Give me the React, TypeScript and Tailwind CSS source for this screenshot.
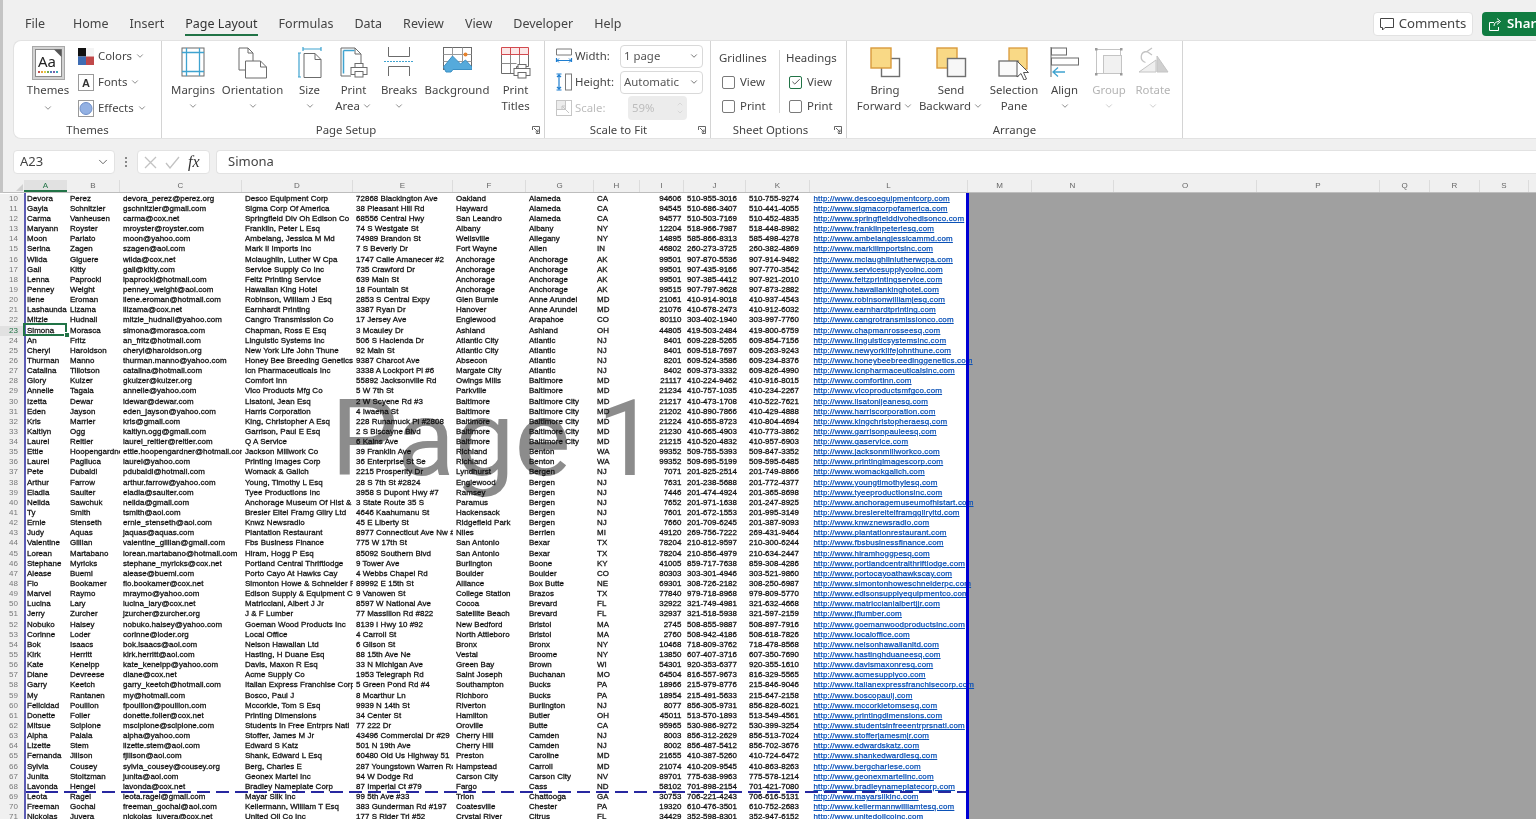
import React from 'react';
import { ChevronDown, Check } from 'lucide-react';

const ui = "font-['Noto_Sans','Open_Sans',sans-serif]";

const rawRows = `Devora|Perez|devora_perez@perez.org|Desco Equipment Corp|72868 Blackington Ave|Oakland|Alameda|CA|94606|510-955-3016|510-755-9274|http://www.descoequipmentcorp.com
Gayla|Schnitzler|gschnitzler@gmail.com|Sigma Corp Of America|38 Pleasant Hill Rd|Hayward|Alameda|CA|94545|510-686-3407|510-441-4055|http://www.sigmacorpofamerica.com
Carma|Vanheusen|carma@cox.net|Springfield Div Oh Edison Co|68556 Central Hwy|San Leandro|Alameda|CA|94577|510-503-7169|510-452-4835|http://www.springfielddivohedisonco.com
Maryann|Royster|mroyster@royster.com|Franklin, Peter L Esq|74 S Westgate St|Albany|Albany|NY|12204|518-966-7987|518-448-8982|http://www.franklinpeterlesq.com
Moon|Parlato|moon@yahoo.com|Ambelang, Jessica M Md|74989 Brandon St|Wellsville|Allegany|NY|14895|585-866-8313|585-498-4278|http://www.ambelangjessicammd.com
Serina|Zagen|szagen@aol.com|Mark Ii Imports Inc|7 S Beverly Dr|Fort Wayne|Allen|IN|46802|260-273-3725|260-382-4869|http://www.markiiimportsinc.com
Wilda|Giguere|wilda@cox.net|Mclaughlin, Luther W Cpa|1747 Calle Amanecer #2|Anchorage|Anchorage|AK|99501|907-870-5536|907-914-9482|http://www.mclaughlinlutherwcpa.com
Gail|Kitty|gail@kitty.com|Service Supply Co Inc|735 Crawford Dr|Anchorage|Anchorage|AK|99501|907-435-9166|907-770-3542|http://www.servicesupplycoinc.com
Lenna|Paprocki|lpaprocki@hotmail.com|Feltz Printing Service|639 Main St|Anchorage|Anchorage|AK|99501|907-385-4412|907-921-2010|http://www.feltzprintingservice.com
Penney|Weight|penney_weight@aol.com|Hawaiian King Hotel|18 Fountain St|Anchorage|Anchorage|AK|99515|907-797-9628|907-873-2882|http://www.hawaiiankinghotel.com
Ilene|Eroman|ilene.eroman@hotmail.com|Robinson, William J Esq|2853 S Central Expy|Glen Burnie|Anne Arundel|MD|21061|410-914-9018|410-937-4543|http://www.robinsonwilliamjesq.com
Lashaunda|Lizama|llizama@cox.net|Earnhardt Printing|3387 Ryan Dr|Hanover|Anne Arundel|MD|21076|410-678-2473|410-912-6032|http://www.earnhardtprinting.com
Mitzie|Hudnall|mitzie_hudnall@yahoo.com|Cangro Transmission Co|17 Jersey Ave|Englewood|Arapahoe|CO|80110|303-402-1940|303-997-7760|http://www.cangrotransmissionco.com
Simona|Morasca|simona@morasca.com|Chapman, Ross E Esq|3 Mcauley Dr|Ashland|Ashland|OH|44805|419-503-2484|419-800-6759|http://www.chapmanrosseesq.com
An|Fritz|an_fritz@hotmail.com|Linguistic Systems Inc|506 S Hacienda Dr|Atlantic City|Atlantic|NJ|8401|609-228-5265|609-854-7156|http://www.linguisticsystemsinc.com
Cheryl|Haroldson|cheryl@haroldson.org|New York Life John Thune|92 Main St|Atlantic City|Atlantic|NJ|8401|609-518-7697|609-263-9243|http://www.newyorklifejohnthune.com
Thurman|Manno|thurman.manno@yahoo.com|Honey Bee Breeding Genetics|9387 Charcot Ave|Absecon|Atlantic|NJ|8201|609-524-3586|609-234-8376|http://www.honeybeebreedinggenetics.com
Catalina|Tillotson|catalina@hotmail.com|Icn Pharmaceuticals Inc|3338 A Lockport Pl #6|Margate City|Atlantic|NJ|8402|609-373-3332|609-826-4990|http://www.icnpharmaceuticalsinc.com
Glory|Kulzer|gkulzer@kulzer.org|Comfort Inn|55892 Jacksonville Rd|Owings Mills|Baltimore|MD|21117|410-224-9462|410-916-8015|http://www.comfortinn.com
Annelle|Tagala|annelle@yahoo.com|Vico Products Mfg Co|5 W 7th St|Parkville|Baltimore|MD|21234|410-757-1035|410-234-2267|http://www.vicoproductsmfgco.com
Izetta|Dewar|idewar@dewar.com|Lisatoni, Jean Esq|2 W Scyene Rd #3|Baltimore|Baltimore City|MD|21217|410-473-1708|410-522-7621|http://www.lisatonijeanesq.com
Eden|Jayson|eden_jayson@yahoo.com|Harris Corporation|4 Iwaena St|Baltimore|Baltimore City|MD|21202|410-890-7866|410-429-4888|http://www.harriscorporation.com
Kris|Marrier|kris@gmail.com|King, Christopher A Esq|228 Runamuck Pl #2808|Baltimore|Baltimore City|MD|21224|410-655-8723|410-804-4694|http://www.kingchristopheraesq.com
Kaitlyn|Ogg|kaitlyn.ogg@gmail.com|Garrison, Paul E Esq|2 S Biscayne Blvd|Baltimore|Baltimore City|MD|21230|410-665-4903|410-773-3862|http://www.garrisonpauleesq.com
Laurel|Reitler|laurel_reitler@reitler.com|Q A Service|6 Kains Ave|Baltimore|Baltimore City|MD|21215|410-520-4832|410-957-6903|http://www.qaservice.com
Ettie|Hoopengardner|ettie.hoopengardner@hotmail.com|Jackson Millwork Co|39 Franklin Ave|Richland|Benton|WA|99352|509-755-5393|509-847-3352|http://www.jacksonmillworkco.com
Laurel|Pagliuca|laurel@yahoo.com|Printing Images Corp|36 Enterprise St Se|Richland|Benton|WA|99352|509-695-5199|509-595-6485|http://www.printingimagescorp.com
Pete|Dubaldi|pdubaldi@hotmail.com|Womack & Galich|2215 Prosperity Dr|Lyndhurst|Bergen|NJ|7071|201-825-2514|201-749-8866|http://www.womackgalich.com
Arthur|Farrow|arthur.farrow@yahoo.com|Young, Timothy L Esq|28 S 7th St #2824|Englewood|Bergen|NJ|7631|201-238-5688|201-772-4377|http://www.youngtimothylesq.com
Eladia|Saulter|eladia@saulter.com|Tyee Productions Inc|3958 S Dupont Hwy #7|Ramsey|Bergen|NJ|7446|201-474-4924|201-365-8698|http://www.tyeeproductionsinc.com
Nelida|Sawchuk|nelida@gmail.com|Anchorage Museum Of Hist & Art|3 State Route 35 S|Paramus|Bergen|NJ|7652|201-971-1638|201-247-8925|http://www.anchoragemuseumofhistart.com
Ty|Smith|tsmith@aol.com|Bresler Eitel Framg Gllry Ltd|4646 Kaahumanu St|Hackensack|Bergen|NJ|7601|201-672-1553|201-995-3149|http://www.breslereitelframggllryltd.com
Ernie|Stenseth|ernie_stenseth@aol.com|Knwz Newsradio|45 E Liberty St|Ridgefield Park|Bergen|NJ|7660|201-709-6245|201-387-9093|http://www.knwznewsradio.com
Judy|Aquas|jaquas@aquas.com|Plantation Restaurant|8977 Connecticut Ave Nw #3|Niles|Berrien|MI|49120|269-756-7222|269-431-9464|http://www.plantationrestaurant.com
Valentine|Gillian|valentine_gillian@gmail.com|Fbs Business Finance|775 W 17th St|San Antonio|Bexar|TX|78204|210-812-9597|210-300-6244|http://www.fbsbusinessfinance.com
Lorean|Martabano|lorean.martabano@hotmail.com|Hiram, Hogg P Esq|85092 Southern Blvd|San Antonio|Bexar|TX|78204|210-856-4979|210-634-2447|http://www.hiramhoggpesq.com
Stephane|Myricks|stephane_myricks@cox.net|Portland Central Thriftlodge|9 Tower Ave|Burlington|Boone|KY|41005|859-717-7638|859-308-4286|http://www.portlandcentralthriftlodge.com
Alease|Buemi|alease@buemi.com|Porto Cayo At Hawks Cay|4 Webbs Chapel Rd|Boulder|Boulder|CO|80303|303-301-4946|303-521-9860|http://www.portocayoathawkscay.com
Flo|Bookamer|flo.bookamer@cox.net|Simonton Howe & Schneider Pc|89992 E 15th St|Alliance|Box Butte|NE|69301|308-726-2182|308-250-6987|http://www.simontonhoweschneiderpc.com
Marvel|Raymo|mraymo@yahoo.com|Edison Supply & Equipment Co|9 Vanowen St|College Station|Brazos|TX|77840|979-718-8968|979-809-5770|http://www.edisonsupplyequipmentco.com
Lucina|Lary|lucina_lary@cox.net|Matricciani, Albert J Jr|8597 W National Ave|Cocoa|Brevard|FL|32922|321-749-4981|321-632-4668|http://www.matriccianialbertjjr.com
Jerry|Zurcher|jzurcher@zurcher.org|J & F Lumber|77 Massillon Rd #822|Satellite Beach|Brevard|FL|32937|321-518-5938|321-597-2159|http://www.jflumber.com
Nobuko|Halsey|nobuko.halsey@yahoo.com|Goeman Wood Products Inc|8139 I Hwy 10 #92|New Bedford|Bristol|MA|2745|508-855-9887|508-897-7916|http://www.goemanwoodproductsinc.com
Corinne|Loder|corinne@loder.org|Local Office|4 Carroll St|North Attleboro|Bristol|MA|2760|508-942-4186|508-618-7826|http://www.localoffice.com
Bok|Isaacs|bok.isaacs@aol.com|Nelson Hawaiian Ltd|6 Gilson St|Bronx|Bronx|NY|10468|718-809-3762|718-478-8568|http://www.nelsonhawaiianltd.com
Kirk|Herritt|kirk.herritt@aol.com|Hasting, H Duane Esq|88 15th Ave Ne|Vestal|Broome|NY|13850|607-407-3716|607-350-7690|http://www.hastinghduaneesq.com
Kate|Keneipp|kate_keneipp@yahoo.com|Davis, Maxon R Esq|33 N Michigan Ave|Green Bay|Brown|WI|54301|920-353-6377|920-355-1610|http://www.davismaxonresq.com
Diane|Devreese|diane@cox.net|Acme Supply Co|1953 Telegraph Rd|Saint Joseph|Buchanan|MO|64504|816-557-9673|816-329-5565|http://www.acmesupplyco.com
Garry|Keetch|garry_keetch@hotmail.com|Italian Express Franchise Corp|5 Green Pond Rd #4|Southampton|Bucks|PA|18966|215-979-8776|215-846-9046|http://www.italianexpressfranchisecorp.com
My|Rantanen|my@hotmail.com|Bosco, Paul J|8 Mcarthur Ln|Richboro|Bucks|PA|18954|215-491-5633|215-647-2158|http://www.boscopaulj.com
Felicidad|Poullion|fpoullion@poullion.com|Mccorkle, Tom S Esq|9939 N 14th St|Riverton|Burlington|NJ|8077|856-305-9731|856-828-6021|http://www.mccorkletomsesq.com
Donette|Foller|donette.foller@cox.net|Printing Dimensions|34 Center St|Hamilton|Butler|OH|45011|513-570-1893|513-549-4561|http://www.printingdimensions.com
Mitsue|Scipione|mscipione@scipione.com|Students In Free Entrprs Natl|77 222 Dr|Oroville|Butte|CA|95965|530-986-9272|530-399-3254|http://www.studentsinfreeentrprsnatl.com
Alpha|Palaia|alpha@yahoo.com|Stoffer, James M Jr|43496 Commercial Dr #29|Cherry Hill|Camden|NJ|8003|856-312-2629|856-513-7024|http://www.stofferjamesmjr.com
Lizette|Stem|lizette.stem@aol.com|Edward S Katz|501 N 19th Ave|Cherry Hill|Camden|NJ|8002|856-487-5412|856-702-3676|http://www.edwardskatz.com
Fernanda|Jillson|fjillson@aol.com|Shank, Edward L Esq|60480 Old Us Highway 51|Preston|Caroline|MD|21655|410-387-5260|410-724-6472|http://www.shankedwardlesq.com
Sylvia|Cousey|sylvia_cousey@cousey.org|Berg, Charles E|287 Youngstown Warren Rd|Hampstead|Carroll|MD|21074|410-209-9545|410-863-8263|http://www.bergcharlese.com
Junita|Stoltzman|junita@aol.com|Geonex Martel Inc|94 W Dodge Rd|Carson City|Carson City|NV|89701|775-638-9963|775-578-1214|http://www.geonexmartelinc.com
Lavonda|Hengel|lavonda@cox.net|Bradley Nameplate Corp|87 Imperial Ct #79|Fargo|Cass|ND|58102|701-898-2154|701-421-7080|http://www.bradleynameplatecorp.com
Leota|Ragel|leota.ragel@gmail.com|Mayar Silk Inc|99 5th Ave #33|Trion|Chattooga|GA|30753|706-221-4243|706-616-5131|http://www.mayarsilkinc.com
Freeman|Gochal|freeman_gochal@aol.com|Kellermann, William T Esq|383 Gunderman Rd #197|Coatesville|Chester|PA|19320|610-476-3501|610-752-2683|http://www.kellermannwilliamtesq.com
Nickolas|Juvera|nickolas_juvera@cox.net|United Oil Co Inc|177 S Rider Trl #52|Crystal River|Citrus|FL|34429|352-598-8301|352-947-6152|http://www.unitedoilcoinc.com`;

const rows = rawRows.split('\n').map(line => line.split('|'));

const rowGrid =
  'grid grid-cols-[24px_43px_53px_122px_111px_100px_73px_68px_46px_44px_62px_64px_158px]';

const headerCols: [string, string][] = [
  ['A', 'w-[43px]'],
  ['B', 'w-[53px]'],
  ['C', 'w-[122px]'],
  ['D', 'w-[111px]'],
  ['E', 'w-[100px]'],
  ['F', 'w-[73px]'],
  ['G', 'w-[68px]'],
  ['H', 'w-[46px]'],
  ['I', 'w-[44px]'],
  ['J', 'w-[62px]'],
  ['K', 'w-[64px]'],
  ['L', 'w-[158px]'],
  ['M', 'w-[64px]'],
  ['N', 'w-[82px]'],
  ['O', 'w-[143px]'],
  ['P', 'w-[123px]'],
  ['Q', 'w-[50px]'],
  ['R', 'w-[50px]'],
  ['S', 'w-[49px]'],
];

const Chev = ({ className = 'text-[#555]' }: { className?: string }) => (
  <ChevronDown size={10} strokeWidth={1.6} className={`inline-block ${className}`} />
);

/* ribbon icons */
const ThemesIcon = () => (
  <svg width="33" height="34" viewBox="0 0 33 34">
    <rect x="0.500" y="0.500" width="32" height="33" fill="#d2d2d2" stroke="#a8a8a8" />
    <rect x="3.500" y="3.500" width="26" height="27" fill="#fff" stroke="#8a8a8a" />
    <path d="M22 3.500h7.500v7.500z" fill="#555" />
    <text x="6" y="21" fontSize="15" fontFamily="Noto Sans" fill="#222">Aa</text>
    {['#c0504d', '#e8a33d', '#e3cf45', '#6fa84f', '#4f81bd', '#7d5fa8', '#3aa6b9'].map((c, i) => (
      <rect key={c} x={6 + i * 3} y="25" width="2" height="2" fill={c} />
    ))}
  </svg>
);

const ColorsIcon = () => (
  <svg width="16" height="17" viewBox="0 0 16 17">
    <rect x="0" y="0" width="8" height="8.500" fill="#111" />
    <rect x="8" y="0" width="8" height="8.500" fill="#f4f4f4" />
    <rect x="0" y="8.500" width="8" height="8.500" fill="#3f6db3" />
    <rect x="8" y="8.500" width="8" height="8.500" fill="#c0484a" />
  </svg>
);

const FontsIcon = () => (
  <svg width="16" height="17" viewBox="0 0 16 17">
    <rect x="0.500" y="0.500" width="15" height="16" fill="#fff" stroke="#9a9a9a" />
    <text x="4" y="13" fontSize="11" fontWeight="700" fontFamily="Liberation Sans" fill="#333">A</text>
  </svg>
);

const EffectsIcon = () => (
  <svg width="16" height="17" viewBox="0 0 16 17">
    <rect x="0.500" y="0.500" width="15" height="16" fill="#fff" stroke="#9a9a9a" />
    <circle cx="8" cy="8.500" r="6" fill="#93b1e3" stroke="#6f8fc9" />
  </svg>
);

const MarginsIcon = () => (
  <svg width="24" height="30" viewBox="0 0 24 30" fill="none">
    <rect x="1" y="1" width="22" height="28" stroke="#6b6b6b" />
    <path d="M1 5.500h22M1 24.500h22M5.500 1v28M18.500 1v28" stroke="#3fa3d0" strokeWidth="1.300" />
  </svg>
);

const OrientationIcon = () => (
  <svg width="30" height="32" viewBox="0 0 30 32" fill="none" stroke="#6b6b6b">
    <path d="M1 1h9l5 5v10M1 1v22h6" />
    <path d="M10 1v5h5" />
    <path d="M7.500 14h15l6 6v11h-21z" fill="#fff" />
    <path d="M22.500 14v6h6" />
  </svg>
);

const SizeIcon = () => (
  <svg width="24" height="31" viewBox="0 0 24 31" fill="none">
    <path d="M5 1h18M5 -1v4M23 -1v4" stroke="#3fa3d0" strokeWidth="1.200" transform="translate(0 1)" />
    <path d="M1 6v24M-1 6h4M-1 30h4" stroke="#3fa3d0" strokeWidth="1.200" transform="translate(0 0)" />
    <path d="M6 6.500h11l6 6v18H6z" stroke="#6b6b6b" fill="#fff" />
    <path d="M17 6.500v6h6" stroke="#6b6b6b" />
  </svg>
);

const PrinterParts = () => (
  <g stroke="#6b6b6b" fill="#fff">
    <rect x="4.500" y="0.500" width="8" height="4" />
    <rect x="0.500" y="4.500" width="16" height="7" />
    <rect x="4.500" y="8.500" width="8" height="5.500" />
  </g>
);

const PrintAreaIcon = () => (
  <svg width="28" height="32" viewBox="0 0 28 32" fill="none">
    <path d="M1 1h14l6 6v10M1 1v28h10" stroke="#6b6b6b" fill="#fff" />
    <path d="M15 1v6h6" stroke="#6b6b6b" />
    <path d="M3.500 3.500v23M3.500 3.500h11" stroke="#3fa3d0" strokeWidth="1.500" />
    <g transform="translate(10.500 16)"><PrinterParts /></g>
  </svg>
);

const BreaksIcon = () => (
  <svg width="30" height="30" viewBox="0 0 30 30" fill="none">
    <path d="M4.500 0v9.500h21V0M4.500 29v-9.500h21V29" stroke="#6b6b6b" />
    <path d="M0 14.500h30" stroke="#3fa3d0" strokeWidth="1.200" strokeDasharray="2 1" />
  </svg>
);

const BackgroundIcon = () => (
  <svg width="29" height="26" viewBox="0 0 29 26" fill="none">
    <rect x="0.500" y="0.500" width="28" height="22" stroke="#6b6b6b" fill="#fff" />
    <path d="M0.500 7.500h28M0.500 14.500h28M9.500 0.500v22M19.500 0.500v22" stroke="#9a9a9a" />
    <path d="M0.500 20l9-11 8 8 5-4 6.500 7v2.500h-19l-2 2.500H3z" fill="#55aadb" stroke="#3c90c4" />
    <circle cx="22.500" cy="7.500" r="2" fill="#e8812a" />
  </svg>
);

const PrintTitlesIcon = () => (
  <svg width="30" height="32" viewBox="0 0 30 32" fill="none">
    <path d="M0.500 7.500h27v12h-12v7H0.500z" stroke="#6b6b6b" fill="#fff" />
    <path d="M9.500 7v19M18.500 7v12M0.500 16.500h15" stroke="#8a8a8a" />
    <path d="M0.500 0.500h27v7h-27zM9.500 0.500v7M18.500 0.500v7" stroke="#d24a4f" fill="#fbe7e7" />
    <g transform="translate(12.500 17)"><PrinterParts /></g>
  </svg>
);

const WidthIcon = () => (
  <svg width="18" height="17" viewBox="0 0 18 17" fill="none">
    <path d="M1.500 1h15v6h-15z" stroke="#7a7a7a" />
    <path d="M1.500 10v4M16.500 10v4M1.500 12.500h15" stroke="#1f7ed0" strokeWidth="1.200" />
    <path d="M4 10.500l-2 2 2 2M14 10.500l2 2-2 2" stroke="#1f7ed0" />
  </svg>
);

const HeightIcon = () => (
  <svg width="18" height="18" viewBox="0 0 18 18" fill="none">
    <rect x="10.500" y="1" width="6" height="16" stroke="#7a7a7a" />
    <path d="M4 2v14M2 4l2-2 2 2M2 14l2 2 2-2M1.500 1h5M1.500 17h5" stroke="#1f7ed0" strokeWidth="1.200" />
  </svg>
);

const ScaleIcon = () => (
  <svg width="18" height="18" viewBox="0 0 18 18" fill="none" stroke="#c6c6c6">
    <rect x="1.500" y="1.500" width="15" height="15" />
    <rect x="1.500" y="1.500" width="9" height="9" fill="#ececec" />
    <path d="M14 14L7 7M7 11V7h4" />
  </svg>
);

const BringForwardIcon = () => (
  <svg width="31" height="31" viewBox="0 0 31 31">
    <rect x="11.500" y="11.500" width="18" height="18" fill="#fff" stroke="#6f6f6f" strokeWidth="1.400" />
    <rect x="1" y="1" width="20" height="20" fill="#f9d986" stroke="#d99a3c" strokeWidth="1.400" />
  </svg>
);

const SendBackwardIcon = () => (
  <svg width="31" height="31" viewBox="0 0 31 31">
    <rect x="1" y="1" width="20" height="20" fill="#f9d986" stroke="#d99a3c" strokeWidth="1.400" />
    <rect x="11.500" y="11.500" width="18" height="18" fill="#f7f7f7" stroke="#6f6f6f" strokeWidth="1.400" />
  </svg>
);

const SelectionPaneIcon = () => (
  <svg width="33" height="33" viewBox="0 0 33 33">
    <rect x="11" y="1" width="18" height="21" fill="#f9d986" stroke="#d99a3c" strokeWidth="1.300" />
    <rect x="1" y="14" width="19" height="15" fill="#fafafa" stroke="#6f6f6f" strokeWidth="1.300" />
    <path d="M19 14v16l4-3.500 3 6.500 2.500-1-3-6.500h5z" fill="#fff" stroke="#555" />
  </svg>
);

const AlignIcon = () => (
  <svg width="30" height="30" viewBox="0 0 30 30" fill="none">
    <path d="M1 0v30" stroke="#6b6b6b" />
    <rect x="1.500" y="1" width="15" height="7" fill="#fff" stroke="#6b6b6b" />
    <rect x="1.500" y="11" width="27" height="7" fill="#fff" stroke="#6b6b6b" />
    <path d="M15 25H3M8 20.500L3 25l5 4.500" stroke="#3fa3d0" strokeWidth="1.300" />
  </svg>
);

const GroupIcon = () => (
  <svg width="30" height="30" viewBox="0 0 30 30" fill="none" stroke="#c4c4c4">
    <rect x="2.500" y="2.500" width="24" height="24" />
    <rect x="9.500" y="8.500" width="18" height="18" fill="#f1f1f1" />
    <g fill="#9a9a9a" stroke="none">
      <rect x="1" y="1" width="2.500" height="2.500" />
      <rect x="26" y="1" width="2.500" height="2.500" />
      <rect x="1" y="26" width="2.500" height="2.500" />
      <rect x="26" y="26" width="2.500" height="2.500" />
    </g>
  </svg>
);

const RotateIcon = () => (
  <svg width="31" height="27" viewBox="0 0 31 27" fill="none" stroke="#c4c4c4">
    <path d="M1 25L18 13v12z" fill="#efefef" />
    <path d="M19 9l11 16H19z" fill="#cfcfcf" />
    <path d="M14 1l-5 3.500 5 3.500M9.500 4.500c-8 0-8 9-2 11" strokeWidth="1.300" />
  </svg>
);

const RibbonButton = ({
  w,
  icon,
  first,
  second,
  disabled,
}: {
  w: string;
  icon: React.ReactNode;
  first: string;
  second?: string;
  disabled?: boolean;
}) => (
  <div className={`flex flex-col items-center ${w} ${disabled ? 'text-[#b4b4b4]' : 'text-[#444]'}`}>
    <div className="flex h-[36px] shrink-0 items-start justify-center pt-[1px]">{icon}</div>
    <div className="h-[16px] shrink-0 whitespace-nowrap leading-[16px]">{first}</div>
    <div className="flex h-[16px] shrink-0 items-center justify-center gap-[2px] whitespace-nowrap leading-[16px]">
      {second}
      <Chev className={disabled ? 'text-[#b4b4b4]' : 'text-[#555]'} />
    </div>
  </div>
);

const Launcher = ({ w }: { w: string }) => (
  <div className={`flex justify-end pr-[4px] ${w}`}>
    <svg width="8" height="8" viewBox="0 0 8 8" fill="none" stroke="#666">
      <path d="M0.500 4V0.500H7.500V7.500H4M2 2l4 4M6 3.500V6H3.500" />
    </svg>
  </div>
);

const Group = ({
  w,
  label,
  launcher,
  children,
}: {
  w: string;
  label: string;
  launcher?: string;
  children: React.ReactNode;
}) => (
  <div className={`flex shrink-0 flex-col border-r border-[#d4d4d4] ${w}`}>
    <div className="flex h-[82px] pt-[5px]">{children}</div>
    <div className="flex h-[16px] items-center text-[#444]">
      <div className="flex-1 text-center leading-[16px]">{label}</div>
      {launcher && <Launcher w={launcher} />}
    </div>
  </div>
);

const Checkbox = ({ checked }: { checked?: boolean }) => (
  <span
    className={`flex h-[13px] w-[13px] items-center justify-center rounded-[2px] border bg-white ${
      checked ? 'border-[#217346]' : 'border-[#7a7a7a]'
    }`}
  >
    {checked && <Check size={10} strokeWidth={2} className="text-[#333]" />}
  </span>
);

const CheckLine = ({ label, checked }: { label: string; checked?: boolean }) => (
  <div className="flex h-[24px] items-center gap-[5px] pl-[3px]">
    <Checkbox checked={checked} />
    <span>{label}</span>
  </div>
);

const SmallCmd = ({ icon, label }: { icon: React.ReactNode; label: string }) => (
  <div className="flex h-[26px] shrink-0 items-center gap-[4px]">
    {icon}
    <span className="flex items-center gap-[3px] text-[#444]">
      {label}
      <Chev />
    </span>
  </div>
);

const SizeRow = ({ icon, label, value }: { icon: React.ReactNode; label: string; value: string }) => (
  <div className="flex h-[26px] shrink-0 items-center">
    <div className="w-[20px]">{icon}</div>
    <div className="w-[45px] text-[#444]">{label}</div>
    <div className="flex h-[23px] w-[83px] items-center justify-between rounded-[4px] border border-[#d9d9d9] bg-white pl-[3px] pr-[3px] text-[#555]">
      <span>{value}</span>
      <Chev className="text-[#333]" />
    </div>
  </div>
);

const Ribbon = () => (
  <div className={`ml-[13px] flex h-[99px] rounded-l-[8px] border-y border-l border-[#e2e2e2] bg-white text-[11.400px] ${ui}`}>
    <Group w="w-[148px]" label="Themes">
      <div className="flex w-[64px] flex-col items-center pl-[4px] text-[#444]">
        <div className="h-[36px] shrink-0"><ThemesIcon /></div>
        <div className="h-[16px] shrink-0 leading-[16px]">Themes</div>
        <div className="h-[16px] shrink-0"><Chev /></div>
      </div>
      <div className="-mt-[3px] flex flex-col">
        <SmallCmd icon={<ColorsIcon />} label="Colors" />
        <SmallCmd icon={<FontsIcon />} label="Fonts" />
        <SmallCmd icon={<EffectsIcon />} label="Effects" />
      </div>
    </Group>
    <Group w="w-[383px]" label="Page Setup" launcher="w-[14px]">
      <div className="flex pl-[8px]">
        <RibbonButton w="w-[46px]" icon={<MarginsIcon />} first="Margins" />
        <RibbonButton w="w-[73px]" icon={<OrientationIcon />} first="Orientation" />
        <RibbonButton w="w-[41px]" icon={<SizeIcon />} first="Size" />
        <RibbonButton w="w-[47px]" icon={<PrintAreaIcon />} first="Print" second="Area" />
        <RibbonButton w="w-[44px]" icon={<BreaksIcon />} first="Breaks" />
        <div className="flex w-[72px] flex-col items-center text-[#444]">
          <div className="h-[36px] shrink-0 pt-[1px]"><BackgroundIcon /></div>
          <div className="leading-[16px]">Background</div>
        </div>
        <div className="flex w-[45px] flex-col items-center text-[#444]">
          <div className="h-[36px] shrink-0 pt-[1px]"><PrintTitlesIcon /></div>
          <div className="leading-[16px]">Print</div>
          <div className="leading-[16px]">Titles</div>
        </div>
      </div>
    </Group>
    <Group w="w-[166px]" label="Scale to Fit" launcher="w-[18px]">
      <div className="-mt-[3px] flex flex-col pl-[10px]">
        <SizeRow icon={<WidthIcon />} label="Width:" value="1 page" />
        <SizeRow icon={<HeightIcon />} label="Height:" value="Automatic" />
        <div className="flex h-[26px] shrink-0 items-center text-[#bdbdbd]">
          <div className="w-[20px]"><ScaleIcon /></div>
          <div className="w-[53px]">Scale:</div>
          <div className="flex h-[24px] w-[59px] items-center justify-between rounded-[4px] bg-[#ececec] px-[3px]">
            <span className="pl-[1px]">59%</span>
            <span className="flex flex-col text-[#c4c4c4]">
              <ChevronDown size={8} strokeWidth={1.5} className="rotate-180" />
              <ChevronDown size={8} strokeWidth={1.5} />
            </span>
          </div>
        </div>
      </div>
    </Group>
    <Group w="w-[136px]" label="Sheet Options" launcher="w-[16px]">
      <div className="flex pl-[8px] text-[#444]">
        <div className="w-[60px]">
          <div className="h-[24px] leading-[24px]">Gridlines</div>
          <CheckLine label="View" />
          <CheckLine label="Print" />
        </div>
        <div className="mt-[4px] h-[63px] w-px bg-[#d9d9d9]" />
        <div className="w-[62px] pl-[6px]">
          <div className="h-[24px] leading-[24px]">Headings</div>
          <CheckLine label="View" checked />
          <CheckLine label="Print" />
        </div>
      </div>
    </Group>
    <Group w="w-[336px]" label="Arrange">
      <div className="flex pl-[5px]">
        <RibbonButton w="w-[66px]" icon={<BringForwardIcon />} first="Bring" second="Forward" />
        <RibbonButton w="w-[66px]" icon={<SendBackwardIcon />} first="Send" second="Backward" />
        <div className="flex w-[60px] flex-col items-center text-[#444]">
          <div className="h-[36px] shrink-0 pt-[1px]"><SelectionPaneIcon /></div>
          <div className="leading-[16px]">Selection</div>
          <div className="leading-[16px]">Pane</div>
        </div>
        <RibbonButton w="w-[41px]" icon={<AlignIcon />} first="Align" />
        <RibbonButton w="w-[48px]" icon={<GroupIcon />} first="Group" disabled />
        <RibbonButton w="w-[40px]" icon={<RotateIcon />} first="Rotate" disabled />
      </div>
    </Group>
  </div>
);

const TitleBar = () => (
  <div className={`flex h-[40px] items-center pt-[8px] text-[12.500px] text-[#444] ${ui}`}>
    <div className="flex flex-1 items-center gap-[21px] pl-[25px] pt-[1px]">
      <span className="mr-[7px]">File</span>
      <span>Home</span>
      <span>Insert</span>
      <span className="relative text-[#333]">
        Page Layout
        <span className="absolute -bottom-[2px] left-0 right-0 h-[2px] bg-[#217346]" />
      </span>
      <span>Formulas</span>
      <span>Data</span>
      <span>Review</span>
      <span>View</span>
      <span>Developer</span>
      <span>Help</span>
    </div>
    <div className="flex h-[24px] w-[100px] items-center justify-center gap-[5px] rounded-[4px] border border-[#e2e2e2] bg-white text-[13.200px]">
      <svg width="14" height="13" viewBox="0 0 14 13" fill="none" stroke="#444">
        <path d="M0.500 0.500h13v9H5L2.500 12V9.500h-2z" />
      </svg>
      Comments
    </div>
    <div className="ml-[9px] flex h-[24px] w-[54px] items-center gap-[5px] overflow-hidden rounded-l-[4px] bg-[#107c41] pl-[7px] text-[13.200px] text-white">
      <svg width="13" height="13" viewBox="0 0 13 13" fill="none" stroke="#fff" className="shrink-0">
        <path d="M5 4.500H0.500v8h9V9M5 8c0-3 2-4.500 5-4.500M8 0.500l3.500 3-3.500 3" />
      </svg>
      <span className="font-semibold">Share</span>
    </div>
  </div>
);

const FormulaBar = () => (
  <div className={`mt-[11px] flex h-[24px] items-center text-[13px] text-[#444] ${ui}`}>
    <div className="ml-[13px] flex h-[24px] w-[102px] items-center justify-between rounded-[4px] border border-[#e2e2e2] bg-white pl-[6px] pr-[4px]">
      <span>A23</span>
      <ChevronDown size={14} strokeWidth={1.5} className="text-[#555]" />
    </div>
    <div className="flex w-[22px] justify-center">
      <span className="flex flex-col gap-[2px]">
        <span className="h-[2px] w-[2px] bg-[#888]" />
        <span className="h-[2px] w-[2px] bg-[#888]" />
        <span className="h-[2px] w-[2px] bg-[#888]" />
      </span>
    </div>
    <div className="flex h-[24px] w-[73px] items-center gap-[8px] rounded-[4px] border border-[#e2e2e2] bg-white pl-[6px]">
      <svg width="13" height="13" viewBox="0 0 13 13" fill="none" stroke="#c2c2c2" strokeWidth="1.300">
        <path d="M1 1l11 11M12 1L1 12" />
      </svg>
      <svg width="15" height="13" viewBox="0 0 15 13" fill="none" stroke="#c2c2c2" strokeWidth="1.300">
        <path d="M1 7l4 5L14 1" />
      </svg>
      <span className="font-['Liberation_Serif',serif] text-[16px] italic text-[#333]">fx</span>
    </div>
    <div className="ml-[6px] flex h-[24px] flex-1 items-center rounded-l-[4px] border-y border-l border-[#e2e2e2] bg-white pl-[11px]">
      Simona
    </div>
  </div>
);

const ColumnHeaders = () => (
  <div className="mt-[6px] flex h-[13px] w-full border-b border-[#bdbdbd] bg-[#f0f0f0] font-['Liberation_Sans',Arial,sans-serif] text-[8px] leading-[12px] text-[#666]">
    <div className="flex w-[24px] items-end justify-end">
      <span className="mb-[1px] mr-[1px] h-0 w-0 border-b-[7px] border-l-[7px] border-b-[#d0d0d0] border-l-transparent" />
    </div>
    {headerCols.map(([name, w]) => (
      <div
        key={name}
        className={
          name === 'A'
            ? `${w} border-b-2 border-[#217346] bg-[#e1e1e1] text-center text-[#217346]`
            : `${w} border-r border-[#dcdcdc] text-center`
        }
      >
        {name}
      </div>
    ))}
  </div>
);

const Row = ({ index, cells }: { index: number; cells: string[] }) => {
  const textCell = 'overflow-hidden whitespace-nowrap pl-[3px]';
  return (
    <div className={`${rowGrid} relative h-[10.150px] leading-[10.150px]`}>
      <div
        className={
          index === 23
            ? 'bg-[#e1e1e1] pl-[3px] text-center text-[8px] text-[#217346] [-webkit-text-stroke:0px]'
            : 'bg-[#f0f0f0] pl-[3px] text-center text-[8px] text-[#777] [-webkit-text-stroke:0px]'
        }
      >
        {index}
      </div>
      {cells.slice(0, 8).map((c, i) => (
        <div key={i} className={textCell}>{c}</div>
      ))}
      <div className="overflow-hidden whitespace-nowrap pr-[2.500px] text-right">{cells[8]}</div>
      <div className={textCell}>{cells[9]}</div>
      <div className={textCell}>{cells[10]}</div>
      <div className="whitespace-nowrap pl-[3.500px] tracking-[0.200px] text-[#0b52b8] underline [-webkit-text-stroke:0.250px_#0b52b8]">
        {cells[11]}
      </div>
    </div>
  );
};

const Sheet = () => (
  <div className="h-[626px] overflow-hidden bg-[#a0a0a0]">
    <div className="relative h-full w-[967px] bg-white pt-[0.700px] font-['Liberation_Sans',Arial,sans-serif] text-[7.950px] tracking-[0.050px] text-[#111] [-webkit-text-stroke:0.280px_#111]">
      {/* page watermark sits behind the cells */}
      <div className="absolute left-[331px] top-[187px] font-['Roboto',sans-serif] text-[106px] leading-[118px] tracking-normal whitespace-nowrap text-[#8c8c8c] [-webkit-text-stroke:0px]">
        Page 1
      </div>
      {rows.map((cells, i) => (
        <Row key={i} index={i + 10} cells={cells} />
      ))}
      {/* page break lines and cell cursor lie over the cells */}
      <div className="absolute bottom-0 left-[24px] top-0 w-[2px] bg-[#5c5cb4]" />
      <div className="absolute bottom-0 left-[966px] top-0 w-[3px] bg-[#0000d4]" />
      <div className="absolute left-[26px] top-[598px] h-[2px] w-[940px] bg-[repeating-linear-gradient(90deg,#2828a0_0_13px,transparent_13px_19px)]" />
      <div className="absolute left-[23px] top-[130px] h-[13px] w-[44px] border-2 border-[#217346]" />
      <div className="absolute left-[64px] top-[139px] h-[6px] w-[6px] border border-white bg-[#217346]" />
    </div>
  </div>
);

const App: React.FC = () => {
  return (
    <div className="relative h-screen w-full overflow-hidden bg-[#f0f0f0] blur-[0.400px]">
      <div className="absolute bottom-0 left-0 top-0 w-[3px] bg-[#c4c4c4]" />
      <TitleBar />
      <Ribbon />
      <FormulaBar />
      <ColumnHeaders />
      <Sheet />
    </div>
  );
};

export default App;
